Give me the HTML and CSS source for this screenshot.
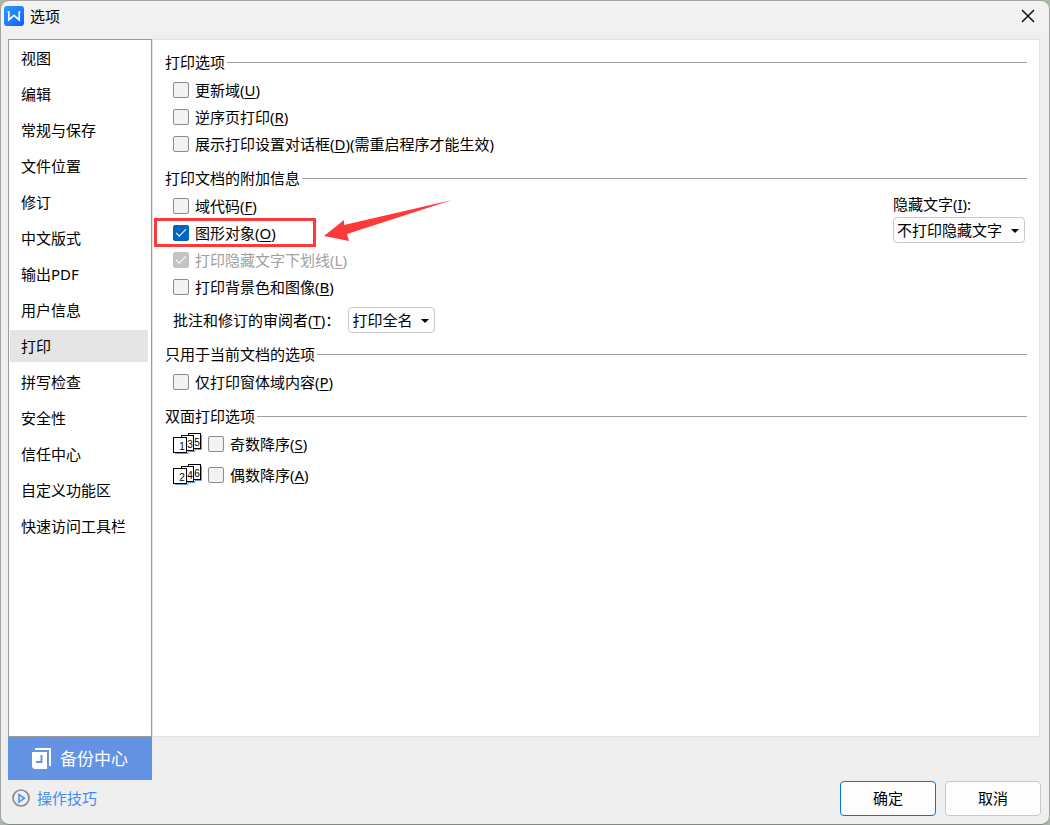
FILE: index.html
```html
<!DOCTYPE html>
<html lang="zh-CN">
<head>
  <meta charset="UTF-8">
  <meta name="viewport" content="width=device-width, initial-scale=1.0">
  <title>选项</title>
  <link rel="stylesheet" href="styles.css">
</head>
<body>
  <form class="dialog">
    <header class="title-bar">
      <svg class="logo" width="20" height="20" viewBox="0 0 20 20">
        <defs>
          <linearGradient id="logo-fill" x1="0" y1="0" x2="1" y2="1">
            <stop offset="0" stop-color="#2b9dff"/>
            <stop offset="1" stop-color="#0b62ff"/>
          </linearGradient>
        </defs>
        <rect width="20" height="20" rx="3" fill="url(#logo-fill)"/>
        <path d="M3.500 6h1.300v7.800l5.200-4.400 5.200 4.400V6h1.300" fill="none" stroke="#fff" stroke-width="1.700"/>
      </svg>
      <h1>选项</h1>
      <button type="button" class="close" aria-label="关闭">
        <svg width="14" height="14" viewBox="0 0 14 14">
          <path d="M1 1l12 12M13 1L1 13" stroke="#111" stroke-width="1.500"/>
        </svg>
      </button>
    </header>

    <nav class="sidebar">
      <ul>
        <li><a href="#">视图</a></li>
        <li><a href="#">编辑</a></li>
        <li><a href="#">常规与保存</a></li>
        <li><a href="#">文件位置</a></li>
        <li><a href="#">修订</a></li>
        <li><a href="#">中文版式</a></li>
        <li><a href="#">输出PDF</a></li>
        <li><a href="#">用户信息</a></li>
        <li><a href="#" class="active">打印</a></li>
        <li><a href="#">拼写检查</a></li>
        <li><a href="#">安全性</a></li>
        <li><a href="#">信任中心</a></li>
        <li><a href="#">自定义功能区</a></li>
        <li><a href="#">快速访问工具栏</a></li>
      </ul>
    </nav>

    <main class="panel">
      <section class="group">
        <h2>打印选项</h2>
        <div class="rows">
          <label class="option"><input type="checkbox"><span>更新域(<u>U</u>)</span></label>
          <label class="option"><input type="checkbox"><span>逆序页打印(<u>R</u>)</span></label>
          <label class="option"><input type="checkbox"><span>展示打印设置对话框(<u>D</u>)(需重启程序才能生效)</span></label>
        </div>
      </section>

      <section class="group">
        <h2>打印文档的附加信息</h2>
        <div class="columns">
          <div class="rows">
            <label class="option"><input type="checkbox"><span>域代码(<u>F</u>)</span></label>
            <div class="marked">
              <label class="option"><input type="checkbox" checked><span>图形对象(<u>O</u>)</span></label>
              <svg class="arrow" width="128" height="42" viewBox="0 0 128 42">
                <polygon points="0,36 20,20 20,25 128,0 23,34 25,41" fill="#fd3a39"/>
              </svg>
            </div>
            <label class="option"><input type="checkbox" checked disabled><span>打印隐藏文字下划线(<u>L</u>)</span></label>
            <label class="option"><input type="checkbox"><span>打印背景色和图像(<u>B</u>)</span></label>
            <div class="reviewer">
              <label for="reviewer">批注和修订的审阅者(<u>T</u>)：</label>
              <div class="select">
                <select id="reviewer">
                  <option>打印全名</option>
                </select>
              </div>
            </div>
          </div>
          <div class="hidden-text">
            <label for="hidden-text">隐藏文字(<u>I</u>):</label>
            <div class="select">
              <select id="hidden-text">
                <option>不打印隐藏文字</option>
              </select>
            </div>
          </div>
        </div>
      </section>

      <section class="group">
        <h2>只用于当前文档的选项</h2>
        <div class="rows">
          <label class="option"><input type="checkbox"><span>仅打印窗体域内容(<u>P</u>)</span></label>
        </div>
      </section>

      <section class="group">
        <h2>双面打印选项</h2>
        <div class="rows duplex">
          <label class="option">
            <svg class="pages" width="29" height="21" viewBox="0 0 29 21">
              <path d="M2 20.500h13v-2h7v-2h6.500V2" fill="none" stroke="#6d9ccc"/>
              <rect x="15.500" y=".5" width="12" height="15" fill="#fff" stroke="#000"/>
              <rect x="8.500" y="2.500" width="12" height="15" fill="#fff" stroke="#000"/>
              <rect x=".5" y="4.500" width="13" height="15" fill="#fff" stroke="#000"/>
              <text x="9" y="17">1</text>
              <text x="17" y="15">3</text>
              <text x="24" y="13">5</text>
            </svg>
            <input type="checkbox"><span>奇数降序(<u>S</u>)</span>
          </label>
          <label class="option">
            <svg class="pages" width="29" height="21" viewBox="0 0 29 21">
              <path d="M2 20.500h13v-2h7v-2h6.500V2" fill="none" stroke="#6d9ccc"/>
              <rect x="15.500" y=".5" width="12" height="15" fill="#fff" stroke="#000"/>
              <rect x="8.500" y="2.500" width="12" height="15" fill="#fff" stroke="#000"/>
              <rect x=".5" y="4.500" width="13" height="15" fill="#fff" stroke="#000"/>
              <text x="9" y="17">2</text>
              <text x="17" y="15">4</text>
              <text x="24" y="13">6</text>
            </svg>
            <input type="checkbox"><span>偶数降序(<u>A</u>)</span>
          </label>
        </div>
      </section>
    </main>

    <button type="button" class="backup">
      <svg width="20" height="22" viewBox="0 0 20 22">
        <path d="M3 0h16v18h-2V2H3z" fill="#fff"/>
        <path d="M0 4h15v17H2l-2-2z" fill="#fff"/>
        <path d="M9.500 7v7H4" fill="none" stroke="#6393e2" stroke-width="2"/>
      </svg>
      备份中心
    </button>

    <footer class="footer">
      <a href="#" class="tips">
        <svg width="18" height="18" viewBox="0 0 18 18">
          <circle cx="9" cy="9" r="8" fill="none" stroke="#8a8a8a" stroke-width="1.700"/>
          <path d="M7 5.500v7.500l5.500-3.700z" fill="#cfe2fb" stroke="#4a93f0" stroke-width="1.500"/>
        </svg>
        操作技巧
      </a>
      <button type="submit" class="btn primary">确定</button>
      <button type="button" class="btn">取消</button>
    </footer>
  </form>
</body>
</html>
```

FILE: styles.css
```css
*,
*::before,
*::after {
  box-sizing: border-box;
}

body {
  margin: 0;
  background-color: #a9b8a8;
  color: #000;
  font-family: "Noto Sans", "Noto Sans CJK SC", sans-serif;
  font-size: 15px;
  line-height: 20px;
}

button,
select {
  font: inherit;
  color: inherit;
}

h1,
h2 {
  margin: 0;
  font-size: 15px;
  font-weight: normal;
}

u {
  text-underline-offset: 2px;
  text-decoration-thickness: 1px;
}

.dialog {
  display: grid;
  grid-template-columns: 144px 1fr;
  grid-template-rows: 38px 1fr 43px 44px;
  min-height: 100vh;
  padding: 0 8px 0 7px;
  border: 1px solid #a3a5a3;
  border-bottom-color: #7f8b7f;
  border-radius: 9px;
  background: linear-gradient(#f2f2f2 31px, #efefef 31px);
}

/* Title bar */
.title-bar {
  grid-column: 1 / -1;
  display: flex;
  align-items: center;
  gap: 6px;
  height: 30px;
  margin-left: -4px;
}

.close {
  display: flex;
  margin-left: auto;
  margin-right: 6px;
  padding: 0;
  border: 0;
  background: none;
}

/* Sidebar */
.sidebar {
  border: 1px solid #9a9a9a;
  background-color: #fff;
}

.sidebar ul {
  display: flex;
  flex-direction: column;
  gap: 4px;
  margin: 0;
  padding: 2px 3px 2px 1px;
  list-style: none;
}

.sidebar a {
  display: block;
  padding: 6px 11px;
  color: #000;
  text-decoration: none;
}

.sidebar a.active {
  background-color: #e5e5e5;
}

/* Options */
.panel {
  margin-right: 1px;
  padding: 8px 12px;
  border: 1px solid #e2e2e2;
  background-color: #fff;
}

.group {
  margin-bottom: 7px;
}

.group h2 {
  display: flex;
  align-items: center;
  gap: 2px;
  height: 28px;
}

.group h2::after {
  content: "";
  flex: 1;
  border-top: 1px solid #a0a0a0;
}

.columns {
  display: flex;
  justify-content: space-between;
}

.rows {
  display: flex;
  flex-direction: column;
  align-items: flex-start;
  padding-left: 8px;
}

.duplex {
  gap: 4px;
}

.option {
  display: flex;
  align-items: center;
  gap: 6px;
  height: 27px;
}

.option input {
  appearance: none;
  display: flex;
  justify-content: center;
  width: 16px;
  height: 16px;
  margin: 0;
  border: 1px solid #8c8c8c;
  border-radius: 2px;
  background-color: #f3f3f3;
}

.option input:checked {
  border-color: #0067c0;
  background-color: #0067c0;
}

.option input:checked::after {
  content: "";
  width: 10px;
  height: 5px;
  margin-top: 3px;
  border: solid #fff;
  border-width: 0 0 1px 1px;
  transform: rotate(-45deg);
}

.option input:disabled {
  border-color: #c3c3c3;
  background-color: #c3c3c3;
}

.option input:disabled + span {
  color: #a0a0a0;
}

.marked {
  position: relative;
}

.marked::before {
  content: "";
  position: absolute;
  top: -1px;
  left: -19px;
  width: 162px;
  height: 29px;
  border: 3px solid #fd3a39;
}

.arrow {
  position: absolute;
  top: -19px;
  left: 151px;
}

.reviewer {
  display: flex;
  align-items: center;
  gap: 8px;
  height: 27px;
  margin-top: 6px;
}

.select {
  position: relative;
}

.select::after {
  content: "";
  position: absolute;
  top: 12px;
  right: 6px;
  border: 4px solid transparent;
  border-top-color: #000;
  border-bottom: 0;
  pointer-events: none;
}

.select select {
  appearance: none;
  display: block;
  height: 26px;
  padding: 0 21px 0 3px;
  border: 1px solid #c8c8c8;
  border-radius: 4px;
  background-color: #fdfdfd;
}

.hidden-text {
  display: flex;
  flex-direction: column;
  gap: 1px;
  padding-right: 2px;
}

.hidden-text label {
  line-height: 24px;
}

.hidden-text select {
  width: 132px;
}

.pages text {
  font-family: "Liberation Sans", sans-serif;
  font-size: 10px;
  text-anchor: middle;
}

/* Bottom bar */
.backup {
  grid-column: 1;
  display: flex;
  align-items: center;
  justify-content: center;
  gap: 8px;
  padding: 0;
  border: 0;
  background-color: #6393e2;
  color: #fff;
  font-size: 17px;
}

.footer {
  grid-column: 1 / -1;
  display: flex;
  align-items: flex-start;
  gap: 9px;
  padding-top: 1px;
}

.tips {
  display: flex;
  align-items: center;
  gap: 7px;
  height: 34px;
  margin-right: auto;
  padding-left: 4px;
  color: #3f8cf3;
  text-decoration: none;
}

.btn {
  width: 96px;
  height: 35px;
  padding: 0 0 2px;
  border: 1px solid #c8c8c8;
  border-radius: 4px;
  background-color: #fdfdfd;
}

.btn.primary {
  border-color: #0078d4;
}
```
